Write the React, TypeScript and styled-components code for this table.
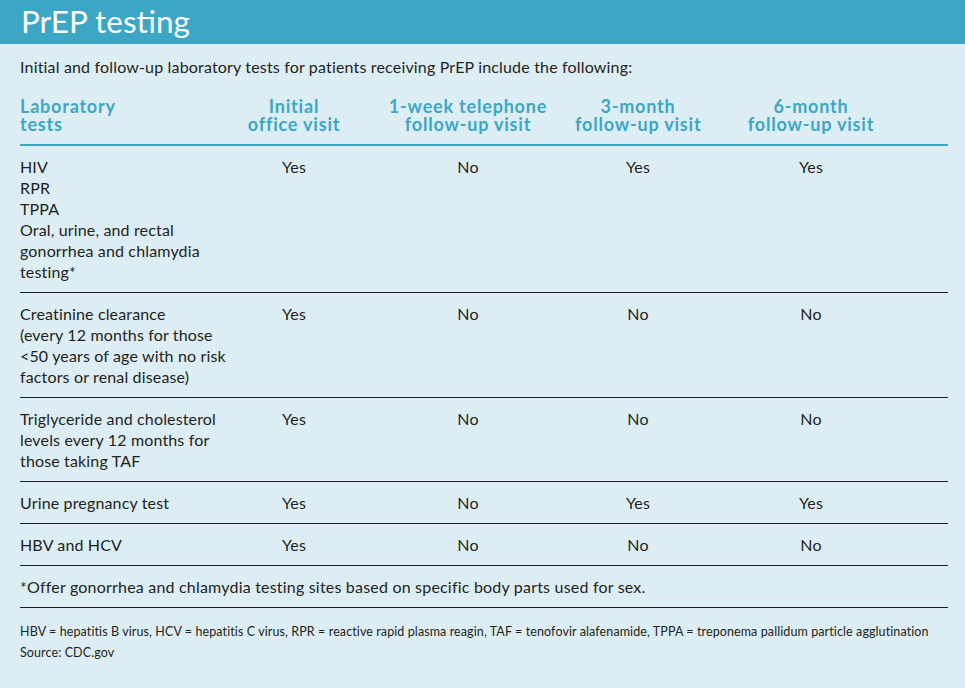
import React from 'react';
import styled, { createGlobalStyle } from 'styled-components';

const GlobalStyle = createGlobalStyle`
  html, body {
    margin: 0;
    padding: 0;
    background: #ffffff;
  }
  body {
    font-family: Lato, "Open Sans", sans-serif;
    color: #231f20;
  }
`;

type Row = {
  test: string[];
  visits: string[];
};

const visitHeaders: string[][] = [
  ['Initial', 'office visit'],
  ['1-week telephone', 'follow-up visit'],
  ['3-month', 'follow-up visit'],
  ['6-month', 'follow-up visit'],
];

const rows: Row[] = [
  {
    test: ['HIV', 'RPR', 'TPPA', 'Oral, urine, and rectal', 'gonorrhea and chlamydia', 'testing*'],
    visits: ['Yes', 'No', 'Yes', 'Yes'],
  },
  {
    test: [
      'Creatinine clearance',
      '(every 12 months for those',
      '<50 years of age with no risk',
      'factors or renal disease)',
    ],
    visits: ['Yes', 'No', 'No', 'No'],
  },
  {
    test: ['Triglyceride and cholesterol', 'levels every 12 months for', 'those taking TAF'],
    visits: ['Yes', 'No', 'No', 'No'],
  },
  {
    test: ['Urine pregnancy test'],
    visits: ['Yes', 'No', 'Yes', 'Yes'],
  },
  {
    test: ['HBV and HCV'],
    visits: ['Yes', 'No', 'No', 'No'],
  },
];

const App: React.FC = () => {
  return (
    <>
      <GlobalStyle />
      <Panel>
        <TitleBar>
          <Title>PrEP testing</Title>
        </TitleBar>
        <Body>
          <Intro>
            Initial and follow-up laboratory tests for patients receiving PrEP include the following:
          </Intro>

          <Table>
            <HeadRow>
              <HeadCell>
                Laboratory
                <br />
                tests
              </HeadCell>
              {visitHeaders.map((lines) => (
                <HeadCell key={lines[0]} $center>
                  {lines[0]}
                  <br />
                  {lines[1]}
                </HeadCell>
              ))}
            </HeadRow>

            {rows.map((row) => (
              <BodyRow key={row.test[0]}>
                <TestCell>
                  {row.test.map((line) => (
                    <Line key={line}>{line}</Line>
                  ))}
                </TestCell>
                {row.visits.map((v, i) => (
                  <ValueCell key={i}>{v}</ValueCell>
                ))}
              </BodyRow>
            ))}

            <Footnote>
              *Offer gonorrhea and chlamydia testing sites based on specific body parts used for sex.
            </Footnote>
          </Table>

          <Notes>
            <Line>
              HBV = hepatitis B virus, HCV = hepatitis C virus, RPR = reactive rapid plasma reagin, TAF =
              tenofovir alafenamide, TPPA = treponema pallidum particle agglutination
            </Line>
            <Line>Source: CDC.gov</Line>
          </Notes>
        </Body>
      </Panel>
    </>
  );
};

// Styled components
const Panel = styled.div`
  width: 965px;
  min-height: 688px;
  background: #ddedf4;
`;

const TitleBar = styled.header`
  height: 44px;
  background: #3ba7c5;
  display: flex;
  align-items: center;
  padding-left: 21px;
  box-sizing: border-box;
`;

const Title = styled.h1`
  margin: 0;
  font-family: Lato, sans-serif;
  font-weight: 400;
  font-size: 31.5px;
  line-height: 1;
  color: #ffffff;
`;

const Body = styled.div`
  padding: 12px 17px 0 20px;
`;

const Intro = styled.p`
  margin: 0;
  font-size: 16px;
  line-height: 21px;
  letter-spacing: 0.17px;
`;

const Table = styled.div`
  width: 928px;
  margin-top: 20px;
`;

const gridColumns = `
  display: grid;
  grid-template-columns: 207px 134px 214px 126px 220px;
  padding-right: 27px;
`;

const HeadRow = styled.div`
  ${gridColumns}
  padding-bottom: 11px;
  border-bottom: 2px solid #3ba7c5;
`;

const HeadCell = styled.div<{ $center?: boolean }>`
  font-weight: 700;
  font-size: 18px;
  line-height: 18px;
  letter-spacing: 0.8px;
  color: #3ba7c5;
  white-space: nowrap;
  text-align: ${(p) => (p.$center ? 'center' : 'left')};
`;

const BodyRow = styled.div`
  ${gridColumns}
  padding-top: 10px;
  padding-bottom: 10px;
  border-bottom: 1px solid #231f20;
  font-size: 16px;
  line-height: 21px;
  letter-spacing: 0.15px;
`;

const TestCell = styled.div`
  white-space: nowrap;
`;

const Line = styled.div``;

const ValueCell = styled.div`
  text-align: center;
`;

const Footnote = styled.p`
  margin: 0;
  padding: 10px 0;
  border-bottom: 1px solid #231f20;
  font-size: 16px;
  line-height: 21px;
  letter-spacing: 0.2px;
`;

const Notes = styled.div`
  padding-top: 13px;
  font-size: 12.5px;
  line-height: 21px;
  letter-spacing: 0.1px;
  white-space: nowrap;
`;

export default App;
